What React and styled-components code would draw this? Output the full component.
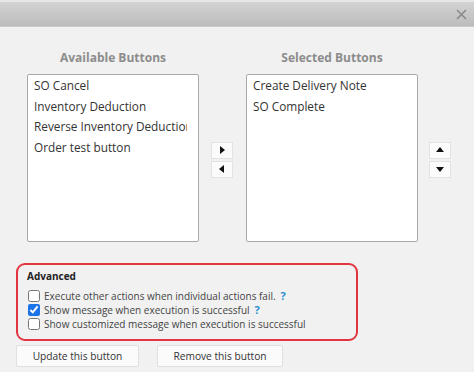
import React, { useState } from "react";
import styled, { createGlobalStyle } from "styled-components";

const GlobalStyle = createGlobalStyle`
  html, body {
    margin: 0;
    padding: 0;
    background: #f1f1f1;
    font-family: "Open Sans", "Liberation Sans", sans-serif;
  }
`;

const available = [
  "SO Cancel",
  "Inventory Deduction",
  "Reverse Inventory Deduction",
  "Order test button",
];

const selected = ["Create Delivery Note", "SO Complete"];

const options = [
  { label: "Execute other actions when individual actions fail.", help: true, checked: false },
  { label: "Show message when execution is successful", help: true, checked: true },
  { label: "Show customized message when execution is successful", help: false, checked: false },
];

function Arrow({ dir }) {
  const shapes = {
    right: "2,0 7,4 2,8",
    left: "6,0 1,4 6,8",
    up: "0,6 4,1 8,6",
    down: "0,2 4,7 8,2",
  };
  return (
    <svg width="8" height="8" viewBox="0 0 8 8">
      <polygon points={shapes[dir]} fill="#111" />
    </svg>
  );
}

function ListColumn({ title, items }) {
  return (
    <Column>
      <ColumnTitle>{title}</ColumnTitle>
      <ListBox>
        {items.map((item) => (
          <ListItem key={item}>{item}</ListItem>
        ))}
      </ListBox>
    </Column>
  );
}

export default function App() {
  const [checks, setChecks] = useState(options.map((o) => o.checked));

  return (
    <>
      <GlobalStyle />
      <Dialog>
        <Header>
          <CloseButton aria-label="close">
            <svg width="11" height="11" viewBox="0 0 11 11">
              <path d="M1 1 L10 10 M10 1 L1 10" stroke="#8a8a8a" strokeWidth="1.6" />
            </svg>
          </CloseButton>
        </Header>
        <Body>
          <Columns>
            <ListColumn title="Available Buttons" items={available} />
            <ArrowStack $left={12} $right={13}>
              <ArrowButton><Arrow dir="right" /></ArrowButton>
              <ArrowButton><Arrow dir="left" /></ArrowButton>
            </ArrowStack>
            <ListColumn title="Selected Buttons" items={selected} />
            <ArrowStack $left={11} $right={0}>
              <ArrowButton><Arrow dir="up" /></ArrowButton>
              <ArrowButton><Arrow dir="down" /></ArrowButton>
            </ArrowStack>
          </Columns>

          <Advanced>
            <AdvancedTitle>Advanced</AdvancedTitle>
            {options.map((opt, i) => (
              <OptionRow key={opt.label}>
                <Check
                  type="checkbox"
                  checked={checks[i]}
                  onChange={() =>
                    setChecks(checks.map((c, j) => (j === i ? !c : c)))
                  }
                />
                <span>{opt.label}</span>
                {opt.help ? <Help>?</Help> : null}
              </OptionRow>
            ))}
          </Advanced>

          <Actions>
            <ActionButton $width={123}>Update this button</ActionButton>
            <ActionButton $width={126}>Remove this button</ActionButton>
          </Actions>
        </Body>
      </Dialog>
    </>
  );
}

const Dialog = styled.div`
  width: 474px;
  height: 372px;
  overflow: hidden;
  background: #f1f1f1;
  border-top: 2px solid #e6e6e6;
  box-sizing: border-box;
`;

const Header = styled.div`
  height: 24px;
  background: linear-gradient(#d3d3d3, #bcbcbc);
  border-bottom: 1px solid #c9c9c9;
  display: flex;
  align-items: center;
  justify-content: flex-end;
  padding-right: 6px;
`;

const CloseButton = styled.button`
  border: 0;
  background: transparent;
  padding: 0;
  width: 14px;
  height: 14px;
  display: flex;
  align-items: center;
  justify-content: center;
  margin-top: 1px;
`;

const Body = styled.div`
  padding: 22px 0 0 16px;
`;

const Columns = styled.div`
  display: flex;
  align-items: center;
  padding-left: 11px;
`;

const Column = styled.div`
  width: 172px;
  display: flex;
  flex-direction: column;
  align-items: center;
`;

const ColumnTitle = styled.div`
  font-size: 12px;
  font-weight: 700;
  color: #8c8c8c;
  line-height: 18px;
  margin-bottom: 7px;
`;

const ListBox = styled.div`
  width: 100%;
  height: 168px;
  box-sizing: border-box;
  background: #fff;
  border: 1px solid #a9a9a9;
  border-radius: 2px;
  padding: 0 11px 0 6px;
  overflow: hidden;
`;

const ListItem = styled.div`
  font-size: 11.8px;
  color: #333;
  line-height: 20.6px;
  white-space: nowrap;
  overflow: hidden;
`;

const ArrowStack = styled.div`
  display: flex;
  flex-direction: column;
  gap: 2px;
  margin: 28px ${(p) => p.$right}px 0 ${(p) => p.$left}px;
`;

const ArrowButton = styled.button`
  width: 22px;
  height: 17px;
  padding: 0;
  border: 1px solid #e3e3e3;
  background: #fbfbfb;
  display: flex;
  align-items: center;
  justify-content: center;
`;

const Advanced = styled.div`
  margin-top: 21px;
  width: 342px;
  height: 78px;
  box-sizing: border-box;
  border: 2px solid #e2353f;
  border-radius: 9px;
  padding: 3px 0 0 9px;
`;

const AdvancedTitle = styled.div`
  font-size: 10px;
  font-weight: 700;
  color: #222;
  line-height: 16px;
  margin-bottom: 5px;
`;

const OptionRow = styled.label`
  display: flex;
  align-items: center;
  height: 14px;
  font-size: 10px;
  color: #444;
  white-space: nowrap;
`;

const Check = styled.input`
  width: 12px;
  height: 12px;
  margin: 0 4px 0 1px;
  accent-color: #1a73e8;
`;

const Help = styled.span`
  color: #2b8dd0;
  font-weight: 700;
  font-size: 11px;
  margin-left: 5px;
  position: relative;
  top: -1px;
`;

const Actions = styled.div`
  display: flex;
  gap: 18px;
  margin-top: 4px;
`;

const ActionButton = styled.button`
  width: ${(p) => p.$width}px;
  height: 22px;
  border: 1px solid #e0e0e0;
  border-radius: 2px;
  background: #fbfbfb;
  font-family: "Open Sans", "Liberation Sans", sans-serif;
  font-size: 10.2px;
  color: #333;
`;
